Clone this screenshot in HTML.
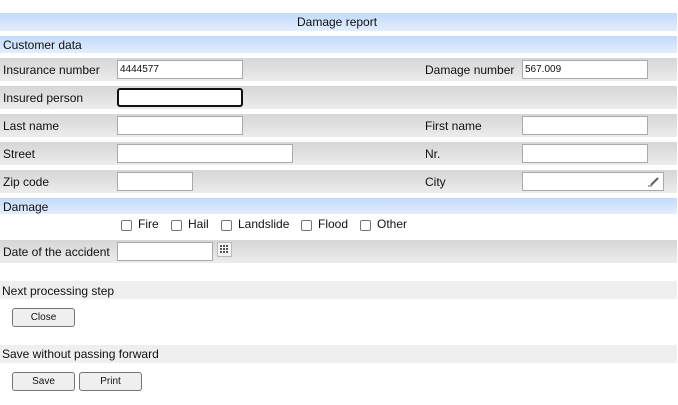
<!DOCTYPE html>
<html><head><style>
body{margin:0;background:#fff;font-family:"Liberation Sans",Arial,sans-serif;font-size:12px;color:#111;}
.b{position:absolute;left:0;width:677px;}
.blue{background:linear-gradient(#c2dafb,#e3eefd);}
.gray{background:linear-gradient(#d6d6d6,#ececec);}
.lt{background:#efefef;}
.t{position:absolute;white-space:nowrap;}
.in{position:absolute;height:17px;border:1px solid #a9a9a9;background:#fff;box-sizing:border-box;font-size:10px;padding:3px 2px;}
.btn{position:absolute;height:19px;border:1px solid #767676;border-radius:3px;background:#efefef;box-sizing:border-box;font-size:10px;text-align:center;line-height:17px;}
.cb{position:absolute;width:11px;height:11px;border:1px solid #767676;border-radius:2px;box-sizing:border-box;background:#fff;top:220px;}
</style></head><body>
<div class="b blue" style="top:13px;height:18px"></div>
<div class="t" style="top:15px;left:297px">Damage report</div>
<div class="b blue" style="top:36px;height:17px"></div>
<div class="t" style="top:38px;left:3px">Customer data</div>

<div class="b gray" style="top:58px;height:23px"></div>
<div class="t" style="top:63px;left:3px">Insurance number</div>
<div class="in" style="left:117px;top:60px;width:126px;height:19px">4444577</div>
<div class="t" style="top:63px;left:425px">Damage number</div>
<div class="in" style="left:522px;top:60px;width:126px;height:19px">567.009</div>

<div class="b gray" style="top:86px;height:23px"></div>
<div class="t" style="top:91px;left:3px">Insured person</div>
<div class="in" style="left:117px;top:88px;width:126px;height:19px;border:2px solid #111;border-radius:3px"></div>

<div class="b gray" style="top:114px;height:23px"></div>
<div class="t" style="top:119px;left:3px">Last name</div>
<div class="in" style="left:117px;top:116px;width:126px;height:19px"></div>
<div class="t" style="top:119px;left:425px">First name</div>
<div class="in" style="left:522px;top:116px;width:126px;height:19px"></div>

<div class="b gray" style="top:142px;height:23px"></div>
<div class="t" style="top:147px;left:3px">Street</div>
<div class="in" style="left:117px;top:144px;width:176px;height:19px"></div>
<div class="t" style="top:147px;left:425px">Nr.</div>
<div class="in" style="left:522px;top:144px;width:126px;height:19px"></div>

<div class="b gray" style="top:170px;height:23px"></div>
<div class="t" style="top:175px;left:3px">Zip code</div>
<div class="in" style="left:117px;top:172px;width:76px;height:19px"></div>
<div class="t" style="top:175px;left:425px">City</div>
<div class="in" style="left:522px;top:172px;width:142px;height:19px"></div>
<svg style="position:absolute;left:647px;top:175px" width="14" height="12"><path d="M4 10 L11 3" stroke="#666" stroke-width="2.2"/><path d="M1 11 H5" stroke="#666" stroke-width="1"/></svg>

<div class="b blue" style="top:198px;height:16px"></div>
<div class="t" style="top:200px;left:3px">Damage</div>
<div class="cb" style="left:121px"></div><div class="t" style="top:217px;left:138px">Fire</div>
<div class="cb" style="left:171px"></div><div class="t" style="top:217px;left:188px">Hail</div>
<div class="cb" style="left:221px"></div><div class="t" style="top:217px;left:238px">Landslide</div>
<div class="cb" style="left:301px"></div><div class="t" style="top:217px;left:318px">Flood</div>
<div class="cb" style="left:360px"></div><div class="t" style="top:217px;left:377px">Other</div>

<div class="b gray" style="top:240px;height:23px"></div>
<div class="t" style="top:245px;left:3px">Date of the accident</div>
<div class="in" style="left:117px;top:242px;width:96px;height:19px"></div>
<svg style="position:absolute;left:217px;top:242px" width="15" height="15"><rect x="0.5" y="0.5" width="14" height="14" fill="#f4f4f4" stroke="#bbb"/><g fill="#555"><rect x="3" y="3" width="2" height="2"/><rect x="6" y="3" width="2" height="2"/><rect x="9" y="3" width="2" height="2"/><rect x="3" y="6" width="2" height="2"/><rect x="6" y="6" width="2" height="2"/><rect x="9" y="6" width="2" height="2"/><rect x="3" y="9" width="2" height="2"/><rect x="6" y="9" width="2" height="2"/><rect x="9" y="9" width="2" height="2"/></g></svg>

<div class="b lt" style="top:281px;height:18px"></div>
<div class="t" style="top:284px;left:2px">Next processing step</div>
<div class="btn" style="left:12px;top:308px;width:63px">Close</div>

<div class="b lt" style="top:345px;height:18px"></div>
<div class="t" style="top:347px;left:2px">Save without passing forward</div>
<div class="btn" style="left:12px;top:372px;width:63px">Save</div>
<div class="btn" style="left:79px;top:372px;width:63px">Print</div>
</body></html>
